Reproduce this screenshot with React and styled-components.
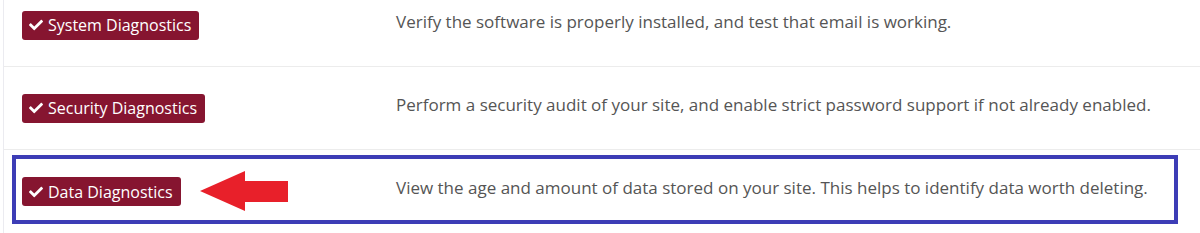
import React from "react";
import styled, { createGlobalStyle } from "styled-components";
import { FaCheck } from "react-icons/fa";

const Global = createGlobalStyle`
  html, body { margin: 0; padding: 0; background: #fff; }
  body { font-family: "Open Sans", "Liberation Sans", sans-serif; overflow: hidden; }
`;

const Page = styled.div`
  position: relative;
  width: 1200px;
  height: 233px;
  overflow: hidden;
  background: #fff;
`;

const Table = styled.div`
  margin-top: -16px;
  margin-left: 3px;
  border-left: 1px solid #ebebf0;
`;

const Row = styled.div`
  display: grid;
  grid-template-columns: 392px 1fr;
  align-items: center;
  height: 83px;
  box-sizing: border-box;
  border-bottom: 1px solid #ececec;
  &:last-child { border-bottom: none; }
`;

const ButtonCell = styled.div`
  padding-left: 18px;
  display: flex;
  align-items: center;
`;

const DiagButton = styled.span`
  display: inline-flex;
  align-items: center;
  gap: 5px;
  height: 29px;
  padding: 0 8px 0 7px;
  box-sizing: border-box;
  background: #861530;
  color: #fff;
  border-radius: 3px;
  font-size: 16px;
  line-height: 1;
  white-space: nowrap;
  svg { width: 14px; height: 14px; }
`;

const Desc = styled.div`
  color: #555;
  font-size: 17px;
  margin-top: -8px;
  white-space: nowrap;
`;

const Highlight = styled.div`
  position: absolute;
  left: 12px;
  top: 155px;
  width: 1166px;
  height: 69px;
  box-sizing: border-box;
  border: 4px solid #3d3db6;
  pointer-events: none;
`;

const Arrow = styled.svg`
  position: absolute;
  left: 198px;
  top: 170px;
`;

const rows = [
  ["System Diagnostics", "Verify the software is properly installed, and test that email is working."],
  ["Security Diagnostics", "Perform a security audit of your site, and enable strict password support if not already enabled."],
  ["Data Diagnostics", "View the age and amount of data stored on your site. This helps to identify data worth deleting."],
];

export default function App() {
  return (
    <Page>
      <Global />
      <Table>
        {rows.map(([label, text]) => (
          <Row key={label}>
            <ButtonCell>
              <DiagButton>
                <FaCheck />
                {label}
              </DiagButton>
            </ButtonCell>
            <Desc>{text}</Desc>
          </Row>
        ))}
      </Table>
      <Highlight />
      <Arrow width="94" height="44" viewBox="0 0 94 44">
        <polygon points="2,21 47,1 47,11 90,11 90,32 47,32 47,41" fill="#e8202a" />
      </Arrow>
    </Page>
  );
}
